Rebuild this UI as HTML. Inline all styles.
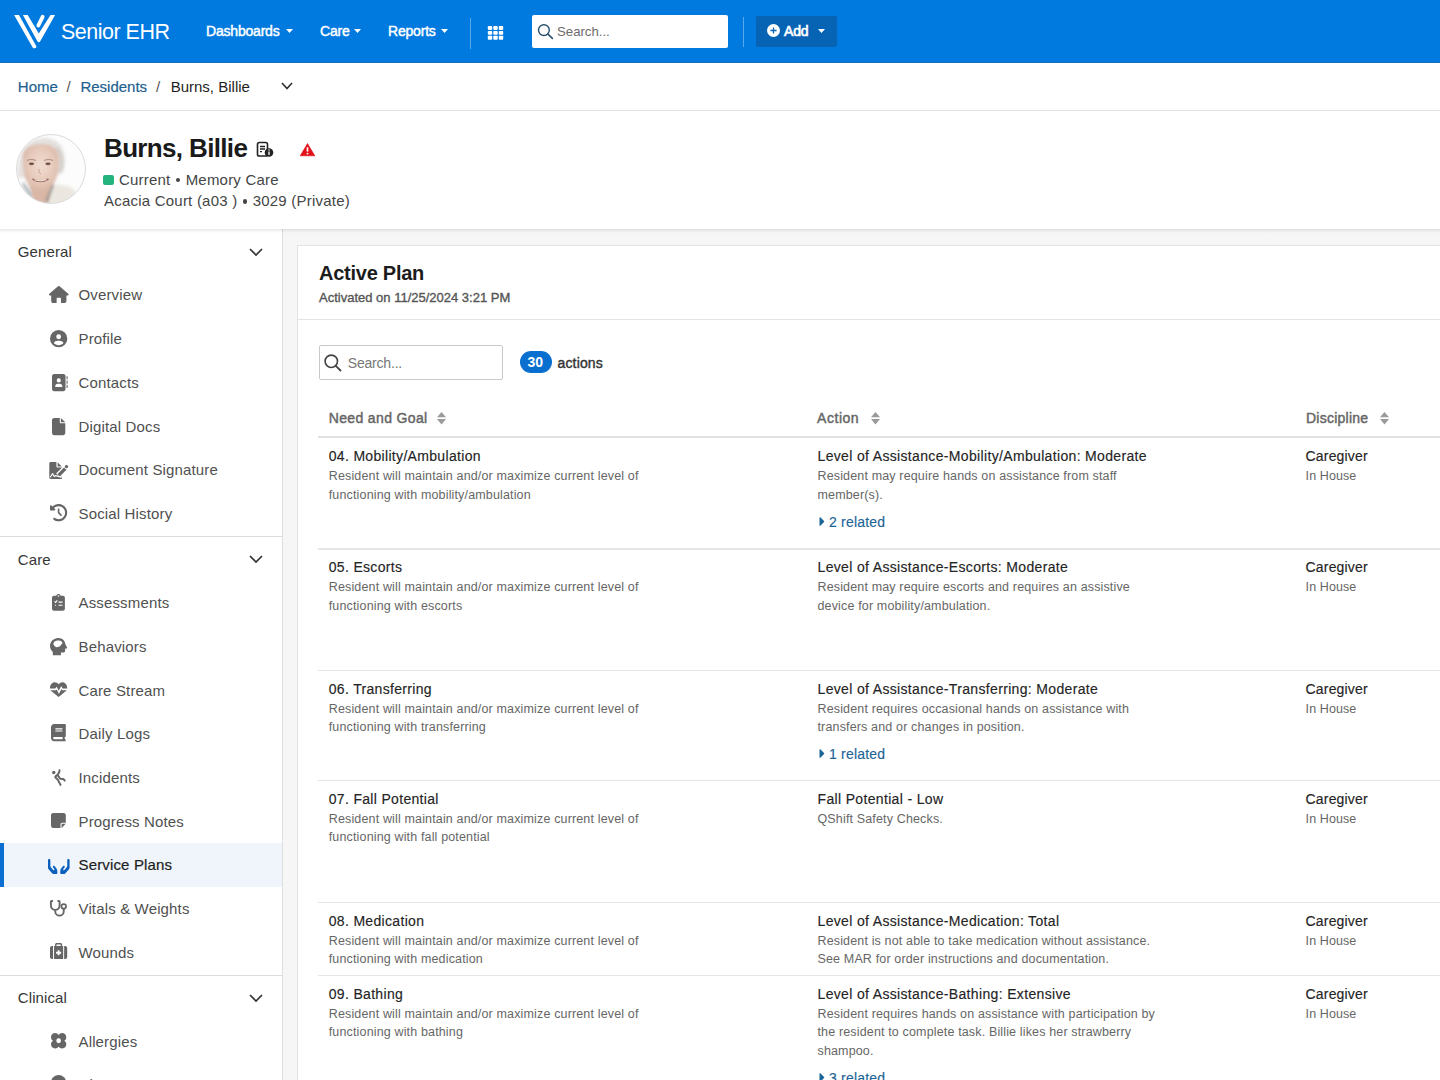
<!DOCTYPE html>
<html><head><meta charset="utf-8"><title>Senior EHR</title>
<style>
html,body{margin:0;padding:0;width:1440px;height:1080px;overflow:hidden;background:#f6f6f6;}
body{position:relative;font-family:"Liberation Sans",sans-serif;}
.t{position:absolute;line-height:1;white-space:nowrap;font-family:"Liberation Sans",sans-serif;}
svg{overflow:visible}
.dot{display:inline-block;width:4.5px;height:4.5px;border-radius:50%;background:#454545;vertical-align:2.5px;margin:0 1px}
</style></head><body>
<div style="position:absolute;left:0px;top:63px;width:1440px;height:166px;background:#fff"></div>
<div style="position:absolute;left:0px;top:0px;width:1440px;height:63px;background:#007adf"></div>
<div style="position:absolute;left:0px;top:61.5px;width:1440px;height:1.5px;background:#1b6dbd"></div>
<div style="position:absolute;left:0px;top:110px;width:1440px;height:1px;background:#e2e2e2"></div>
<div style="position:absolute;left:0px;top:229px;width:282px;height:851px;background:#fff"></div>
<div style="position:absolute;left:282px;top:229px;width:1px;height:851px;background:#dedede"></div>
<div style="position:absolute;left:0px;top:229px;width:1440px;height:4px;background:linear-gradient(rgba(0,0,0,.09),rgba(0,0,0,0))"></div>
<div style="position:absolute;left:297px;top:245px;width:1160px;height:860px;background:#fff;border:1px solid #e3e3e3;box-sizing:border-box"></div>
<svg style="position:absolute;left:0px;top:0px" width="60" height="60" viewBox="0 0 60 60"><g fill="#fff"><path d="M14.1 15H19L36.2 45.9C36.6 46.8 36.3 47.7 35.4 48L34.6 48.3C33.8 48.5 33 48.2 32.7 47.5Z"/><path d="M22.9 15H27.7L38.8 33.6L50.5 15H55.1L40.1 41.5C39.5 42.4 38.1 42.4 37.5 41.5Z"/></g><line x1="38.3" y1="25.6" x2="42.6" y2="16.8" stroke="#fff" stroke-width="3.8" stroke-linecap="round"/></svg>
<div class="t" style="left:61px;top:21.93px;font-size:21.5px;color:#fff;letter-spacing:-0.5px;">Senior EHR</div>
<div class="t" style="left:206px;top:24.10px;font-size:14px;color:#fff;letter-spacing:-0.2px;-webkit-text-stroke:0.45px #fff">Dashboards</div>
<svg style="position:absolute;left:286px;top:29px" width="7" height="4" viewBox="0 0 7 4"><path d="M0 0H7L3.5 4Z" fill="#fff"/></svg>
<div class="t" style="left:320px;top:24.10px;font-size:14px;color:#fff;letter-spacing:-0.2px;-webkit-text-stroke:0.45px #fff">Care</div>
<svg style="position:absolute;left:354px;top:29px" width="7" height="4" viewBox="0 0 7 4"><path d="M0 0H7L3.5 4Z" fill="#fff"/></svg>
<div class="t" style="left:388px;top:24.10px;font-size:14px;color:#fff;letter-spacing:-0.2px;-webkit-text-stroke:0.45px #fff">Reports</div>
<svg style="position:absolute;left:441px;top:29px" width="7" height="4" viewBox="0 0 7 4"><path d="M0 0H7L3.5 4Z" fill="#fff"/></svg>
<div style="position:absolute;left:470px;top:18px;width:1px;height:31px;background:rgba(255,255,255,.35)"></div>
<svg style="position:absolute;left:487px;top:26px" width="17" height="14" viewBox="0 0 17 14"><rect x="0.8" y="0.0" width="4.4" height="3.9" rx="0.8" fill="#fff"/><rect x="6.3" y="0.0" width="4.4" height="3.9" rx="0.8" fill="#fff"/><rect x="11.8" y="0.0" width="4.4" height="3.9" rx="0.8" fill="#fff"/><rect x="0.8" y="4.9" width="4.4" height="3.9" rx="0.8" fill="#fff"/><rect x="6.3" y="4.9" width="4.4" height="3.9" rx="0.8" fill="#fff"/><rect x="11.8" y="4.9" width="4.4" height="3.9" rx="0.8" fill="#fff"/><rect x="0.8" y="9.8" width="4.4" height="3.9" rx="0.8" fill="#fff"/><rect x="6.3" y="9.8" width="4.4" height="3.9" rx="0.8" fill="#fff"/><rect x="11.8" y="9.8" width="4.4" height="3.9" rx="0.8" fill="#fff"/></svg>
<div style="position:absolute;left:532px;top:14.5px;width:196px;height:33px;background:#fff;border-radius:2px"></div>
<svg style="position:absolute;left:0px;top:0px" width="1" height="1" viewBox="0 0 1 1"><circle cx="543.9" cy="30.1" r="5.4" fill="none" stroke="#27506c" stroke-width="1.4"/><line x1="547.9" y1="34.1" x2="552.4" y2="38.4" stroke="#27506c" stroke-width="1.5" stroke-linecap="round"/></svg>
<div class="t" style="left:557px;top:25.28px;font-size:13.2px;color:#6b6b6b;">Search...</div>
<div style="position:absolute;left:743px;top:17px;width:1px;height:30px;background:rgba(255,255,255,.35)"></div>
<div style="position:absolute;left:756px;top:16px;width:81px;height:30.5px;background:#0764b5;border-radius:2px"></div>
<svg style="position:absolute;left:767px;top:23.8px" width="13" height="13" viewBox="0 0 13 13"><circle cx="6.5" cy="6.5" r="6.5" fill="#fff"/><path d="M6.5 3.4V9.6M3.4 6.5H9.6" stroke="#0764b5" stroke-width="1.3"/></svg>
<div class="t" style="left:784px;top:24.10px;font-size:14px;color:#fff;letter-spacing:-0.2px;-webkit-text-stroke:0.65px #fff">Add</div>
<svg style="position:absolute;left:818px;top:29px" width="7" height="4" viewBox="0 0 7 4"><path d="M0 0H7L3.5 4Z" fill="#fff"/></svg>
<div class="t" style="left:17.8px;top:79.25px;font-size:15px;color:#21618f;-webkit-text-stroke:0.2px #21618f">Home</div>
<div class="t" style="left:66.5px;top:79.25px;font-size:15px;color:#555;">/</div>
<div class="t" style="left:80.4px;top:79.25px;font-size:15px;color:#21618f;-webkit-text-stroke:0.2px #21618f">Residents</div>
<div class="t" style="left:156px;top:79.25px;font-size:15px;color:#555;">/</div>
<div class="t" style="left:170.7px;top:79.25px;font-size:15px;color:#1e1e1e;">Burns, Billie</div>
<svg style="position:absolute;left:281px;top:82px" width="12" height="8" viewBox="0 0 12 8"><path d="M1 1L6 6.5L11 1" fill="none" stroke="#333" stroke-width="1.7"/></svg>
<svg style="position:absolute;left:16px;top:134px" width="70" height="70" viewBox="0 0 70 70"><defs><clipPath id="av"><circle cx="35" cy="35" r="34.3"/></clipPath>
<filter id="bl" x="-30%" y="-30%" width="160%" height="160%"><feGaussianBlur stdDeviation="1.5"/></filter>
<filter id="bl2" x="-30%" y="-30%" width="160%" height="160%"><feGaussianBlur stdDeviation="0.6"/></filter>
<radialGradient id="sk" cx="0.5" cy="0.45" r="0.6"><stop offset="0" stop-color="#f0dcd2"/><stop offset="0.6" stop-color="#e6c9ba"/><stop offset="1" stop-color="#d7b3a2"/></radialGradient></defs>
<g clip-path="url(#av)"><rect width="70" height="70" fill="#fcfcfc"/>
<g filter="url(#bl)">
<path d="M2 44 C0 20 12 4 28 4 C42 4 50 14 49 30 C48 38 46 40 43 40 Z" fill="#e4e1de"/>
<path d="M40 14 C46 20 47 30 44 38" stroke="#cfcac6" stroke-width="3" fill="none"/>
<path d="M4 70 L6 50 L16 56 L26 70Z" fill="#e6edf2"/>
<path d="M34 50 L52 52 Q62 56 64 70 L28 70Z" fill="#ebe7e0"/>
<path d="M13 50 L36 50 L32 70 L18 70Z" fill="#d9b6a5"/>
</g>
<path d="M7 22 C7 14 16 10 26 10 C36 10 43 15 43 26 C43 35 42 41 39 47 C36 54 31 57 25 57 C18 57 11 51 9 43 C7 36 7 29 7 22Z" fill="url(#sk)" filter="url(#bl)"/>
<path d="M7 49 L15 62 M37 51 L30.5 67.5" stroke="#6a7177" stroke-width="1.3" fill="none" filter="url(#bl)"/>
<g filter="url(#bl2)">
<path d="M11 26.5 Q15.5 24.5 20 26.5" stroke="#b08e82" stroke-width="1.2" fill="none"/>
<path d="M28 26.5 Q32.5 24.5 37 26.5" stroke="#b08e82" stroke-width="1.2" fill="none"/>
<ellipse cx="15.5" cy="29.8" rx="2.6" ry="1.4" fill="#74544c"/><ellipse cx="32" cy="29.8" rx="2.6" ry="1.4" fill="#74544c"/>
<path d="M23 35 Q22 39 25 40" stroke="#c9a293" stroke-width="1" fill="none"/>
<path d="M16.5 45 Q24.5 50 32.5 45" stroke="#9c6d63" stroke-width="1.6" fill="none"/>
<path d="M18.5 45.8 Q24.5 48 30.5 45.8" stroke="#f3e8e2" stroke-width="1" fill="none"/>
</g></g><circle cx="35" cy="35" r="34.5" fill="none" stroke="#d6d6d6" stroke-width="0.9"/></svg>
<div class="t" style="left:104px;top:135.40px;font-size:26px;color:#1a1a1a;font-weight:700;letter-spacing:-0.65px;">Burns, Billie</div>
<svg style="position:absolute;left:256px;top:141px" width="18" height="17" viewBox="0 0 18 17"><rect x="1.5" y="1.5" width="10" height="13.5" rx="1.8" fill="none" stroke="#222" stroke-width="1.6"/><path d="M4 5.5H9M4 8H9M4 10.7H6" stroke="#222" stroke-width="1.3"/><circle cx="13" cy="11.5" r="4.3" fill="#222"/><path d="M13 10.4V14" stroke="#fff" stroke-width="1.3"/><circle cx="13" cy="8.9" r="0.75" fill="#fff"/></svg>
<svg style="position:absolute;left:300px;top:142.5px" width="15" height="13" viewBox="0 0 15 13"><path d="M7.5 0.5L14.8 12.8H0.2Z" fill="#e3101a" stroke="#e3101a" stroke-width="0.6" stroke-linejoin="round"/><path d="M7.5 4.3V8.6" stroke="#fff" stroke-width="1.7"/><circle cx="7.5" cy="10.6" r="0.95" fill="#fff"/></svg>
<div style="position:absolute;left:103px;top:174.5px;width:11px;height:10.5px;background:#22b47c;border-radius:2px"></div>
<div class="t" style="left:119px;top:171.75px;font-size:15px;color:#454545;letter-spacing:0.2px;">Current <span class="dot"></span> Memory Care</div>
<div class="t" style="left:104px;top:193.25px;font-size:15px;color:#454545;letter-spacing:0.22px;">Acacia Court (a03 ) <span class="dot"></span> 3029 (Private)</div>
<div class="t" style="left:17.8px;top:244.25px;font-size:15px;color:#363636;letter-spacing:0.1px;">General</div>
<svg style="position:absolute;left:249px;top:248px" width="14" height="9" viewBox="0 0 14 9"><path d="M1 1L7 7L13 1" fill="none" stroke="#333" stroke-width="1.7"/></svg>
<div class="t" style="left:78.5px;top:287.25px;font-size:15px;color:#505050;letter-spacing:0.15px;">Overview</div>
<div class="t" style="left:78.5px;top:331.05px;font-size:15px;color:#505050;letter-spacing:0.15px;">Profile</div>
<div class="t" style="left:78.5px;top:374.85px;font-size:15px;color:#505050;letter-spacing:0.15px;">Contacts</div>
<div class="t" style="left:78.5px;top:418.65px;font-size:15px;color:#505050;letter-spacing:0.15px;">Digital Docs</div>
<div class="t" style="left:78.5px;top:462.45px;font-size:15px;color:#505050;letter-spacing:0.15px;">Document Signature</div>
<div class="t" style="left:78.5px;top:506.25px;font-size:15px;color:#505050;letter-spacing:0.15px;">Social History</div>
<div style="position:absolute;left:0px;top:536px;width:282px;height:1px;background:#dcdcdc"></div>
<div class="t" style="left:17.8px;top:551.65px;font-size:15px;color:#363636;letter-spacing:0.1px;">Care</div>
<svg style="position:absolute;left:249px;top:555.4px" width="14" height="9" viewBox="0 0 14 9"><path d="M1 1L7 7L13 1" fill="none" stroke="#333" stroke-width="1.7"/></svg>
<div style="position:absolute;left:0px;top:843px;width:282px;height:44px;background:#f0f5fb"></div>
<div style="position:absolute;left:0px;top:843px;width:4px;height:44px;background:#0a6fd0"></div>
<div class="t" style="left:78.5px;top:595.25px;font-size:15px;color:#505050;letter-spacing:0.15px;">Assessments</div>
<div class="t" style="left:78.5px;top:638.95px;font-size:15px;color:#505050;letter-spacing:0.15px;">Behaviors</div>
<div class="t" style="left:78.5px;top:682.65px;font-size:15px;color:#505050;letter-spacing:0.15px;">Care Stream</div>
<div class="t" style="left:78.5px;top:726.35px;font-size:15px;color:#505050;letter-spacing:0.15px;">Daily Logs</div>
<div class="t" style="left:78.5px;top:770.05px;font-size:15px;color:#505050;letter-spacing:0.15px;">Incidents</div>
<div class="t" style="left:78.5px;top:813.75px;font-size:15px;color:#505050;letter-spacing:0.15px;">Progress Notes</div>
<div class="t" style="left:78.5px;top:857.45px;font-size:15px;color:#1e1e1e;letter-spacing:0.15px;-webkit-text-stroke:0.2px #1e1e1e">Service Plans</div>
<div class="t" style="left:78.5px;top:901.15px;font-size:15px;color:#505050;letter-spacing:0.15px;">Vitals &amp; Weights</div>
<div class="t" style="left:78.5px;top:944.85px;font-size:15px;color:#505050;letter-spacing:0.15px;">Wounds</div>
<div style="position:absolute;left:0px;top:975px;width:282px;height:1px;background:#dcdcdc"></div>
<div class="t" style="left:17.8px;top:990.25px;font-size:15px;color:#363636;letter-spacing:0.1px;">Clinical</div>
<svg style="position:absolute;left:249px;top:994px" width="14" height="9" viewBox="0 0 14 9"><path d="M1 1L7 7L13 1" fill="none" stroke="#333" stroke-width="1.7"/></svg>
<div class="t" style="left:78.5px;top:1033.95px;font-size:15px;color:#505050;letter-spacing:0.15px;">Allergies</div>
<svg style="position:absolute;left:48.6px;top:285.8px" width="19.6" height="17.1" viewBox="0 0 576 512" preserveAspectRatio="none"><path fill="#666" fill-rule="evenodd" d="M575.8 255.5c0 18-15 32.1-32 32.1h-32l.7 160.2c.2 35.5-28.5 64.3-64 64.3H352V384c0-17.7-14.3-32-32-32H256c-17.7 0-32 14.3-32 32V512H128.1c-35.3 0-64-28.7-64-64V287.6H32c-18 0-32-14-32-32.1c0-9 3-17 10-24L266.4 8c7-7 15-8 22-8s15 2 21 7L564.8 231.5c8 7 12 15 11 24z"/></svg>
<svg style="position:absolute;left:49.7px;top:330.3px" width="17.3" height="17.3" viewBox="0 0 512 512" preserveAspectRatio="none"><path fill="#666" fill-rule="evenodd" d="M0 256a256 256 0 1 1 512 0A256 256 0 1 1 0 256zM399 384.2C376.9 345.8 335.4 320 288 320H224c-47.4 0-88.9 25.8-111 64.2c35.2 39.2 86.2 63.8 143 63.8s107.8-24.7 143-63.8zM256 272a72 72 0 1 0 0-144 72 72 0 1 0 0 144z"/></svg>
<svg style="position:absolute;left:50.8px;top:373.75px" width="16.6" height="17.2" viewBox="0 0 512 512" preserveAspectRatio="none"><path fill="#666" fill-rule="evenodd" d="M96 0C60.7 0 32 28.7 32 64V448c0 35.3 28.7 64 64 64H384c35.3 0 64-28.7 64-64V64c0-35.3-28.7-64-64-64H96zM208 288h64c44.2 0 80 35.8 80 80c0 8.8-7.2 16-16 16H144c-8.8 0-16-7.2-16-16c0-44.2 35.8-80 80-80zM176 192a64 64 0 1 1 128 0 64 64 0 1 1 -128 0z"/><path fill="#666" d="M480 64h32v96h-32zM480 192h32v96h-32zM480 320h32v96h-32z"/></svg>
<svg style="position:absolute;left:52px;top:417.8px" width="13.3" height="17.2" viewBox="0 0 384 512" preserveAspectRatio="none"><path fill="#666" d="M0 64C0 28.7 28.7 0 64 0H224V128c0 17.7 14.3 32 32 32H384V448c0 35.3-28.7 64-64 64H64c-35.3 0-64-28.7-64-64V64zm384 64H256V0L384 128z"/></svg>
<svg style="position:absolute;left:48.9px;top:461.7px" width="19.1" height="17.0" viewBox="0 0 19.1 17" preserveAspectRatio="none"><path fill="#666" d="M1.6 0H7.4V4.2c0 .8.6 1.4 1.4 1.4H12.9V17H1.6C.8 17 .3 16.4 .3 15.6V1.4C.3.6.8 0 1.6 0z"/><path fill="#666" d="M8.6 .3L12.7 4.4H8.6z"/><path d="M9.3 13.6L17.2 5.6" stroke="#fff" stroke-width="6"/><path d="M9.6 13.4L16.2 6.6" stroke="#666" stroke-width="3.4"/><circle cx="17.5" cy="4.6" r="1.7" fill="#666"/><path d="M1.2 15.2L3.6 11.6 5.2 14.6 6.4 13.6 12.8 15.2" stroke="#fff" stroke-width="1.1" fill="none" stroke-linejoin="round"/></svg>
<svg style="position:absolute;left:49.8px;top:504.4px" width="17.2" height="17.3" viewBox="0 0 512 512" preserveAspectRatio="none"><path fill="#666" d="M75 75L41 41C25.9 25.9 0 36.6 0 57.9V168c0 13.3 10.7 24 24 24H134.1c21.4 0 32.1-25.9 17-41l-30.8-30.8C155 85.5 203 64 256 64c106 0 192 86 192 192s-86 192-192 192c-40.8 0-78.6-12.7-109.7-34.4c-14.5-10.1-34.4-6.6-44.6 7.9s-6.6 34.4 7.9 44.6C151.2 495 201.7 512 256 512c141.4 0 256-114.6 256-256S397.4 0 256 0C185.3 0 121.3 28.7 75 75zm181 53c-13.3 0-24 10.7-24 24V256c0 6.4 2.5 12.5 7 17l72 72c9.4 9.4 24.6 9.4 33.9 0s9.4-24.6 0-33.9l-65-65V152c0-13.3-10.7-24-24-24z"/></svg>
<svg style="position:absolute;left:52.2px;top:593.9px" width="12.9" height="16.7" viewBox="0 0 13 17" preserveAspectRatio="none"><path fill="#666" fill-rule="evenodd" d="M6.5 0c1 0 1.9.7 2.2 1.7H11c1.1 0 2 .9 2 2V15c0 1.1-.9 2-2 2H2c-1.1 0-2-.9-2-2V3.7c0-1.1.9-2 2-2h2.3C4.6.7 5.5 0 6.5 0zM6.5 1.2a.8.8 0 1 0 0 1.6.8.8 0 1 0 0-1.6z"/><path d="M2.6 7.6l1 1 1.8-2M6.6 8.3H10.6M3 11.4h.9M6.6 11.4H10.6" stroke="#fff" stroke-width="1.1" fill="none"/></svg>
<svg style="position:absolute;left:49.8px;top:637.8px" width="17.2" height="17.2" viewBox="0 0 17 17" preserveAspectRatio="none"><path fill="#666" fill-rule="evenodd" d="M8.2 0C12.3 0 15 2.9 15.2 6.2l1.7 3.1c.3.5-.1 1-.6 1H15v2.2c0 1-.8 1.8-1.8 1.8h-2.4V17H2.8v-3.2C1.1 12.4 0 10.4 0 8 0 3.6 3.7 0 8.2 0z"/><path fill="#fff" d="M3.5 5.2C4 3.3 6 2.2 8 2.5c1.6-.4 3.6.3 4.2 2 .2.9-.3 1.6-1 1.9-.6 1.5-2 2.4-3.4 2.4-1.3.8-2.9.1-3.4-1.1-.8-.4-1.1-1.5-.9-2.5z"/></svg>
<svg style="position:absolute;left:49.8px;top:682.2px" width="17.2" height="15.0" viewBox="0 0 17 15" preserveAspectRatio="none"><path fill="#666" d="M0 6C0 2.7 2.2.2 4.6.2c1.6 0 3 .8 3.9 2.1C9.4 1 10.8.2 12.4.2 14.8.2 17 2.7 17 6c0 .1 0 .3 0 .4h-4.6l-1.3-2.5-2.5 4.9-1.9-4.1-1.5 1.7H0z"/><path fill="#666" d="M.5 8.3h5.4l.8-.9 2.1 4.5 2.5-5 .6 1.3H16.5c-.2.3-.4.6-.7.9L8.5 15 1.2 9.1c-.3-.3-.5-.5-.7-.8z"/></svg>
<svg style="position:absolute;left:51.1px;top:724.4px" width="14.8" height="17.3" viewBox="0 0 448 512" preserveAspectRatio="none"><path fill="#666" fill-rule="evenodd" d="M96 0C43 0 0 43 0 96V416c0 53 43 96 96 96H384h32c17.7 0 32-14.3 32-32s-14.3-32-32-32V384c17.7 0 32-14.3 32-32V32c0-17.7-14.3-32-32-32H384 96zM96 384H352v64H96c-17.7 0-32-14.3-32-32s14.3-32 32-32z"/><path fill="#fff" d="M144 128H336c8.8 0 16 7.2 16 16s-7.2 16-16 16H144c-8.8 0-16-7.2-16-16s7.2-16 16-16zm0 64H336c8.8 0 16 7.2 16 16s-7.2 16-16 16H144c-8.8 0-16-7.2-16-16s7.2-16 16-16z"/></svg>
<svg style="position:absolute;left:52px;top:768.9px" width="13.9" height="17.2" viewBox="0 0 14 17" preserveAspectRatio="none"><circle cx="1.8" cy="3.4" r="1.7" fill="#666"/><path d="M7.6 1.2C7.6 3 6.8 4.8 5.6 5.6L3.6 7.3c-.3.3-.4.8 0 1.2l2.1 2 2.9 5.2M5.6 5.8l2.6 3.9 3.2.2 1.5 1.6" stroke="#666" stroke-width="2" fill="none" stroke-linecap="round" stroke-linejoin="round"/></svg>
<svg style="position:absolute;left:51.1px;top:813.3px" width="14.8" height="15.0" viewBox="0 32 448 448" preserveAspectRatio="none"><path fill="#666" d="M64 32C28.7 32 0 60.7 0 96V416c0 35.3 28.7 64 64 64H288V368c0-26.5 21.5-48 48-48H448V96c0-35.3-28.7-64-64-64H64zM448 352H402.5 336c-8.8 0-16 7.2-16 16v66.5V480l32-32 64-64 32-32z"/></svg>
<svg style="position:absolute;left:47.6px;top:858.9px" width="21.6" height="15.0" viewBox="0 0 22 15" preserveAspectRatio="none"><path fill="#0c60bd" d="M1.2 0c.7 0 1.2.5 1.2 1.2v5.6c0 .5.2 1 .5 1.4l2.4 2.9c.3.3.7.3 1 0 .3-.3.3-.7.1-1L5 8.3c-.3-.5-.2-1.1.3-1.4.4-.3 1-.2 1.3.2l2 2.4c.6.7.9 1.6.9 2.5V14c0 .6-.4 1-1 1H5.3c-.4 0-.7-.2-.9-.4L.6 10.3C.2 9.8 0 9.2 0 8.5V1.2C0 .5.5 0 1.2 0z"/><path fill="#0c60bd" d="M20.8 0c-.7 0-1.2.5-1.2 1.2v5.6c0 .5-.2 1-.5 1.4l-2.4 2.9c-.3.3-.7.3-1 0-.3-.3-.3-.7-.1-1L17 8.3c.3-.5.2-1.1-.3-1.4-.4-.3-1-.2-1.3.2l-2 2.4c-.6.7-.9 1.6-.9 2.5V14c0 .6.4 1 1 1h3.2c.4 0 .7-.2.9-.4l3.8-4.3c.4-.5.6-1.1.6-1.8V1.2C22 .5 21.5 0 20.8 0z"/></svg>
<svg style="position:absolute;left:49.8px;top:900px" width="17.8" height="16.7" viewBox="0 0 18 17" preserveAspectRatio="none"><path d="M2.3 1H1.6C1.1 1 .9 1.4.9 1.8v3.8C.9 8 2.9 10 5.3 10s4.4-2 4.4-4.4V1.8C9.7 1.4 9.5 1 9 1H8.3M5.3 10v1.6c0 2.4 1.9 4.3 4.3 4.3s4.3-1.9 4.3-4.3V9" stroke="#666" stroke-width="1.9" fill="none" stroke-linecap="round"/><circle cx="13.9" cy="6.6" r="2.3" fill="none" stroke="#666" stroke-width="1.8"/></svg>
<svg style="position:absolute;left:49.8px;top:943.3px" width="17.2" height="16.1" viewBox="0 0 17 16" preserveAspectRatio="none"><path fill="#666" fill-rule="evenodd" d="M5 1.6C5 .7 5.7 0 6.6 0h3.8c.9 0 1.6.7 1.6 1.6V3h-1.4V1.6c0-.1-.1-.2-.2-.2H6.6c-.1 0-.2.1-.2.2V3H5zM4 3h9v13H4zM7.6 7.2v1.6H6v1.8h1.6v1.6h1.8v-1.6H11V8.8H9.4V7.2z"/><path fill="#666" d="M0 5c0-1.1.9-2 2-2h1v13H2c-1.1 0-2-.9-2-2zM17 5c0-1.1-.9-2-2-2h-1v13h1c1.1 0 2-.9 2-2z"/></svg>
<svg style="position:absolute;left:50.9px;top:1032.8px" width="15.3" height="15.5" viewBox="0 0 15 15" preserveAspectRatio="none"><path fill="#666" fill-rule="evenodd" d="M4 0C6 0 7 1.2 7.5 2 8 1.2 9 0 11 0c2.3 0 4 1.7 4 4 0 2-1.2 3-2 3.5.8.5 2 1.5 2 3.5 0 2.3-1.7 4-4 4-2 0-3-1.2-3.5-2-.5.8-1.5 2-3.5 2-2.3 0-4-1.7-4-4 0-2 1.2-3 2-3.5C1.2 7 0 6 0 4 0 1.7 1.7 0 4 0zM7.5 5.2a2.3 2.3 0 1 0 0 4.6 2.3 2.3 0 1 0 0-4.6z"/></svg>
<svg style="position:absolute;left:50.9px;top:1075.3px" width="15.2" height="15.2" viewBox="0 0 16 16" preserveAspectRatio="none"><circle cx="8" cy="8" r="8" fill="#666"/></svg>
<div class="t" style="left:78.5px;top:1076.85px;font-size:15px;color:#505050;letter-spacing:0.15px;">Diagnoses</div>
<div class="t" style="left:319px;top:263.30px;font-size:20px;color:#1c1c1c;font-weight:700;letter-spacing:-0.25px;">Active Plan</div>
<div class="t" style="left:319px;top:290.95px;font-size:13px;color:#555;-webkit-text-stroke:0.35px #555">Activated on 11/25/2024 3:21 PM</div>
<div style="position:absolute;left:297px;top:319px;width:1143px;height:1px;background:#e3e3e3"></div>
<div style="position:absolute;left:318.5px;top:345px;width:184px;height:34.5px;background:#fff;border:1px solid #c9c9c9;border-radius:2px;box-sizing:border-box"></div>
<svg style="position:absolute;left:324px;top:353.5px" width="18" height="18" viewBox="0 0 18 18"><circle cx="7.3" cy="7.3" r="6.2" fill="none" stroke="#444" stroke-width="1.6"/><line x1="11.8" y1="11.8" x2="16.5" y2="16.5" stroke="#444" stroke-width="1.8" stroke-linecap="round"/></svg>
<div class="t" style="left:347.8px;top:355.60px;font-size:14px;color:#777;letter-spacing:-0.2px;">Search...</div>
<div style="position:absolute;left:519.7px;top:351px;width:32.5px;height:22px;background:#0a6fcf;border-radius:11px"></div>
<div class="t" style="left:527.5px;top:355.40px;font-size:14px;color:#fff;font-weight:700;">30</div>
<div class="t" style="left:557.5px;top:355.60px;font-size:14px;color:#333;letter-spacing:0.15px;-webkit-text-stroke:0.4px #333">actions</div>
<div class="t" style="left:328.75px;top:411.10px;font-size:14px;color:#666;letter-spacing:0.35px;-webkit-text-stroke:0.45px #666">Need and Goal</div>
<svg style="position:absolute;left:437px;top:411.5px" width="9" height="12.5" viewBox="0 0 9 12.5"><path d="M4.5 0L9 5.2H0Z M4.5 12.5L9 7H0Z" fill="#9a9a9a"/></svg>
<div class="t" style="left:817px;top:411.10px;font-size:14px;color:#666;letter-spacing:0.55px;-webkit-text-stroke:0.45px #666">Action</div>
<svg style="position:absolute;left:871px;top:411.5px" width="9" height="12.5" viewBox="0 0 9 12.5"><path d="M4.5 0L9 5.2H0Z M4.5 12.5L9 7H0Z" fill="#9a9a9a"/></svg>
<div class="t" style="left:1306px;top:411.10px;font-size:14px;color:#666;letter-spacing:0.25px;-webkit-text-stroke:0.45px #666">Discipline</div>
<svg style="position:absolute;left:1380px;top:411.5px" width="9" height="12.5" viewBox="0 0 9 12.5"><path d="M4.5 0L9 5.2H0Z M4.5 12.5L9 7H0Z" fill="#9a9a9a"/></svg>
<div style="position:absolute;left:318px;top:436px;width:1122px;height:2px;background:#e2e2e2"></div>
<div class="t" style="left:328.75px;top:449.30px;font-size:14px;color:#242424;letter-spacing:0.32px;-webkit-text-stroke:0.15px #242424">04. Mobility/Ambulation</div>
<div class="t" style="left:328.75px;top:470.07px;font-size:12.5px;color:#666;letter-spacing:0.15px;">Resident will maintain and/or maximize current level of</div>
<div class="t" style="left:328.75px;top:488.68px;font-size:12.5px;color:#666;letter-spacing:0.15px;">functioning with mobility/ambulation</div>
<div class="t" style="left:817.5px;top:449.30px;font-size:14px;color:#242424;letter-spacing:0.34px;-webkit-text-stroke:0.15px #242424">Level of Assistance-Mobility/Ambulation: Moderate</div>
<div class="t" style="left:817.5px;top:470.07px;font-size:12.5px;color:#666;letter-spacing:0.15px;">Resident may require hands on assistance from staff</div>
<div class="t" style="left:817.5px;top:488.68px;font-size:12.5px;color:#666;letter-spacing:0.15px;">member(s).</div>
<svg style="position:absolute;left:819px;top:516.9px" width="5.5" height="9" viewBox="0 0 5.5 9"><path d="M0.5 0.8C0.5 0.2 1 0 1.4 0.3L5 4C5.3 4.3 5.3 4.7 5 5L1.4 8.7C1 9 0.5 8.8 0.5 8.2Z" fill="#1d6496"/></svg>
<div class="t" style="left:828.9px;top:514.60px;font-size:14px;color:#1d6496;letter-spacing:0.22px;-webkit-text-stroke:0.15px #1d6496">2 related</div>
<div class="t" style="left:1305.6px;top:449.30px;font-size:14px;color:#242424;letter-spacing:0.17px;-webkit-text-stroke:0.15px #242424">Caregiver</div>
<div class="t" style="left:1305.6px;top:470.07px;font-size:12.5px;color:#666;letter-spacing:0.1px;">In House</div>
<div style="position:absolute;left:318px;top:548px;width:1122px;height:1.5px;background:#e6e6e6"></div>
<div class="t" style="left:328.75px;top:560.30px;font-size:14px;color:#242424;letter-spacing:0.32px;-webkit-text-stroke:0.15px #242424">05. Escorts</div>
<div class="t" style="left:328.75px;top:581.08px;font-size:12.5px;color:#666;letter-spacing:0.15px;">Resident will maintain and/or maximize current level of</div>
<div class="t" style="left:328.75px;top:599.67px;font-size:12.5px;color:#666;letter-spacing:0.15px;">functioning with escorts</div>
<div class="t" style="left:817.5px;top:560.30px;font-size:14px;color:#242424;letter-spacing:0.34px;-webkit-text-stroke:0.15px #242424">Level of Assistance-Escorts: Moderate</div>
<div class="t" style="left:817.5px;top:581.08px;font-size:12.5px;color:#666;letter-spacing:0.15px;">Resident may require escorts and requires an assistive</div>
<div class="t" style="left:817.5px;top:599.67px;font-size:12.5px;color:#666;letter-spacing:0.15px;">device for mobility/ambulation.</div>
<div class="t" style="left:1305.6px;top:560.30px;font-size:14px;color:#242424;letter-spacing:0.17px;-webkit-text-stroke:0.15px #242424">Caregiver</div>
<div class="t" style="left:1305.6px;top:581.08px;font-size:12.5px;color:#666;letter-spacing:0.1px;">In House</div>
<div style="position:absolute;left:318px;top:669.5px;width:1122px;height:1.5px;background:#e6e6e6"></div>
<div class="t" style="left:328.75px;top:681.80px;font-size:14px;color:#242424;letter-spacing:0.32px;-webkit-text-stroke:0.15px #242424">06. Transferring</div>
<div class="t" style="left:328.75px;top:702.58px;font-size:12.5px;color:#666;letter-spacing:0.15px;">Resident will maintain and/or maximize current level of</div>
<div class="t" style="left:328.75px;top:721.17px;font-size:12.5px;color:#666;letter-spacing:0.15px;">functioning with transferring</div>
<div class="t" style="left:817.5px;top:681.80px;font-size:14px;color:#242424;letter-spacing:0.34px;-webkit-text-stroke:0.15px #242424">Level of Assistance-Transferring: Moderate</div>
<div class="t" style="left:817.5px;top:702.58px;font-size:12.5px;color:#666;letter-spacing:0.15px;">Resident requires occasional hands on assistance with</div>
<div class="t" style="left:817.5px;top:721.17px;font-size:12.5px;color:#666;letter-spacing:0.15px;">transfers and or changes in position.</div>
<svg style="position:absolute;left:819px;top:749.4px" width="5.5" height="9" viewBox="0 0 5.5 9"><path d="M0.5 0.8C0.5 0.2 1 0 1.4 0.3L5 4C5.3 4.3 5.3 4.7 5 5L1.4 8.7C1 9 0.5 8.8 0.5 8.2Z" fill="#1d6496"/></svg>
<div class="t" style="left:828.9px;top:747.10px;font-size:14px;color:#1d6496;letter-spacing:0.22px;-webkit-text-stroke:0.15px #1d6496">1 related</div>
<div class="t" style="left:1305.6px;top:681.80px;font-size:14px;color:#242424;letter-spacing:0.17px;-webkit-text-stroke:0.15px #242424">Caregiver</div>
<div class="t" style="left:1305.6px;top:702.58px;font-size:12.5px;color:#666;letter-spacing:0.1px;">In House</div>
<div style="position:absolute;left:318px;top:779.6px;width:1122px;height:1.5px;background:#e6e6e6"></div>
<div class="t" style="left:328.75px;top:791.90px;font-size:14px;color:#242424;letter-spacing:0.32px;-webkit-text-stroke:0.15px #242424">07. Fall Potential</div>
<div class="t" style="left:328.75px;top:812.67px;font-size:12.5px;color:#666;letter-spacing:0.15px;">Resident will maintain and/or maximize current level of</div>
<div class="t" style="left:328.75px;top:831.27px;font-size:12.5px;color:#666;letter-spacing:0.15px;">functioning with fall potential</div>
<div class="t" style="left:817.5px;top:791.90px;font-size:14px;color:#242424;letter-spacing:0.34px;-webkit-text-stroke:0.15px #242424">Fall Potential - Low</div>
<div class="t" style="left:817.5px;top:812.67px;font-size:12.5px;color:#666;letter-spacing:0.15px;">QShift Safety Checks.</div>
<div class="t" style="left:1305.6px;top:791.90px;font-size:14px;color:#242424;letter-spacing:0.17px;-webkit-text-stroke:0.15px #242424">Caregiver</div>
<div class="t" style="left:1305.6px;top:812.67px;font-size:12.5px;color:#666;letter-spacing:0.1px;">In House</div>
<div style="position:absolute;left:318px;top:901.6px;width:1122px;height:1.5px;background:#e6e6e6"></div>
<div class="t" style="left:328.75px;top:913.90px;font-size:14px;color:#242424;letter-spacing:0.32px;-webkit-text-stroke:0.15px #242424">08. Medication</div>
<div class="t" style="left:328.75px;top:934.67px;font-size:12.5px;color:#666;letter-spacing:0.15px;">Resident will maintain and/or maximize current level of</div>
<div class="t" style="left:328.75px;top:953.27px;font-size:12.5px;color:#666;letter-spacing:0.15px;">functioning with medication</div>
<div class="t" style="left:817.5px;top:913.90px;font-size:14px;color:#242424;letter-spacing:0.34px;-webkit-text-stroke:0.15px #242424">Level of Assistance-Medication: Total</div>
<div class="t" style="left:817.5px;top:934.67px;font-size:12.5px;color:#666;letter-spacing:0.15px;">Resident is not able to take medication without assistance.</div>
<div class="t" style="left:817.5px;top:953.27px;font-size:12.5px;color:#666;letter-spacing:0.15px;">See MAR for order instructions and documentation.</div>
<div class="t" style="left:1305.6px;top:913.90px;font-size:14px;color:#242424;letter-spacing:0.17px;-webkit-text-stroke:0.15px #242424">Caregiver</div>
<div class="t" style="left:1305.6px;top:934.67px;font-size:12.5px;color:#666;letter-spacing:0.1px;">In House</div>
<div style="position:absolute;left:318px;top:974.5px;width:1122px;height:1.5px;background:#e6e6e6"></div>
<div class="t" style="left:328.75px;top:986.80px;font-size:14px;color:#242424;letter-spacing:0.32px;-webkit-text-stroke:0.15px #242424">09. Bathing</div>
<div class="t" style="left:328.75px;top:1007.58px;font-size:12.5px;color:#666;letter-spacing:0.15px;">Resident will maintain and/or maximize current level of</div>
<div class="t" style="left:328.75px;top:1026.17px;font-size:12.5px;color:#666;letter-spacing:0.15px;">functioning with bathing</div>
<div class="t" style="left:817.5px;top:986.80px;font-size:14px;color:#242424;letter-spacing:0.34px;-webkit-text-stroke:0.15px #242424">Level of Assistance-Bathing: Extensive</div>
<div class="t" style="left:817.5px;top:1007.58px;font-size:12.5px;color:#666;letter-spacing:0.15px;">Resident requires hands on assistance with participation by</div>
<div class="t" style="left:817.5px;top:1026.17px;font-size:12.5px;color:#666;letter-spacing:0.15px;">the resident to complete task. Billie likes her strawberry</div>
<div class="t" style="left:817.5px;top:1044.78px;font-size:12.5px;color:#666;letter-spacing:0.15px;">shampoo.</div>
<svg style="position:absolute;left:819px;top:1073.0px" width="5.5" height="9" viewBox="0 0 5.5 9"><path d="M0.5 0.8C0.5 0.2 1 0 1.4 0.3L5 4C5.3 4.3 5.3 4.7 5 5L1.4 8.7C1 9 0.5 8.8 0.5 8.2Z" fill="#1d6496"/></svg>
<div class="t" style="left:828.9px;top:1070.70px;font-size:14px;color:#1d6496;letter-spacing:0.22px;-webkit-text-stroke:0.15px #1d6496">3 related</div>
<div class="t" style="left:1305.6px;top:986.80px;font-size:14px;color:#242424;letter-spacing:0.17px;-webkit-text-stroke:0.15px #242424">Caregiver</div>
<div class="t" style="left:1305.6px;top:1007.58px;font-size:12.5px;color:#666;letter-spacing:0.1px;">In House</div>
</body></html>
